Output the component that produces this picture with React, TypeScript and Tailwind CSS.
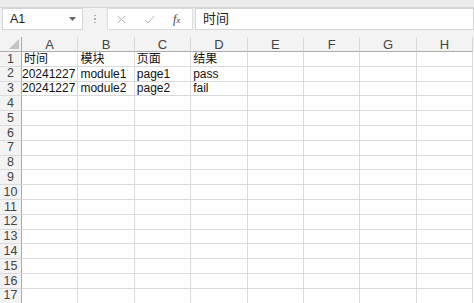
import React from "react";

const columns = ["A", "B", "C", "D", "E", "F", "G", "H"];

type Cell = { text: string; align?: "left" | "right" };

const data: Cell[][] = [
  [{ text: "时间" }, { text: "模块" }, { text: "页面" }, { text: "结果" }],
  [
    { text: "20241227", align: "right" },
    { text: "module1" },
    { text: "page1" },
    { text: "pass" },
  ],
  [
    { text: "20241227", align: "right" },
    { text: "module2" },
    { text: "page2" },
    { text: "fail" },
  ],
];

const rowCount = 17;

function FormulaBar() {
  return (
    <div className="flex h-[37px] flex-col bg-[#f3f3f3]">
      <div className="h-[8px] border-b border-[#d6d6d6] bg-[#ececec]" />
      <div className="flex h-[22px] items-stretch">
        <div className="ml-[2px] flex w-[81px] items-center justify-between border border-[#d4d4d4] bg-white pl-[7px] pr-[6px]">
          <span className="text-[12.5px] text-[#222]">A1</span>
          <svg width="7" height="4" viewBox="0 0 7 4">
            <path d="M0 0 L7 0 L3.5 4 Z" fill="#666" />
          </svg>
        </div>
        <div className="flex w-[24px] items-center justify-center">
          <div className="flex flex-col gap-[2px]">
            <span className="h-[1.5px] w-[1.5px] bg-[#b0b0b0]" />
            <span className="h-[1.5px] w-[1.5px] bg-[#b0b0b0]" />
            <span className="h-[1.5px] w-[1.5px] bg-[#b0b0b0]" />
          </div>
        </div>
        <div className="flex w-[86px] items-center border border-[#dcdcdc] bg-white">
          <svg className="ml-[9px]" width="9" height="9" viewBox="0 0 9 9">
            <path d="M1 1 L8 8 M8 1 L1 8" stroke="#b8b8b8" strokeWidth="1" />
          </svg>
          <svg className="ml-[18px]" width="11" height="9" viewBox="0 0 11 9">
            <path d="M1 5 L4 8 L10 1" stroke="#b8b8b8" strokeWidth="1" fill="none" />
          </svg>
          <span className="ml-[18px] font-['Liberation_Serif',serif] text-[12px] italic leading-none text-[#444]">
            f<span className="text-[9px]">x</span>
          </span>
        </div>
        <div className="ml-[2px] flex flex-1 items-center border border-[#d4d4d4] bg-white pl-[7px]">
          <span className="text-[13px] text-[#222]">时间</span>
        </div>
      </div>
    </div>
  );
}

function Grid() {
  const gridCols = "grid grid-cols-[22px_repeat(8,56.4px)]";
  return (
    <div className="overflow-hidden bg-white">
      <div className={`${gridCols} h-[15px] bg-[#f3f3f3]`}>
        <div className="relative border-b border-r border-[#ababab]">
          <svg className="absolute bottom-[2px] right-[2px]" width="10" height="10" viewBox="0 0 10 10">
            <path d="M10 0 L10 10 L0 10 Z" fill="#c4c4c4" />
          </svg>
        </div>
        {columns.map((c) => (
          <div
            key={c}
            className="flex items-center justify-center border-b border-r border-b-[#ababab] border-r-[#d8d8d8] text-[13px] leading-none text-[#444]"
          >
            {c}
          </div>
        ))}
      </div>
      {Array.from({ length: rowCount }, (_, r) => (
        <div key={r} className={`${gridCols} h-[14.8px]`}>
          <div className="flex items-center justify-center border-b border-r border-b-[#dadada] border-r-[#ababab] bg-[#f3f3f3] text-[12.5px] leading-none text-[#444]">
            {r + 1}
          </div>
          {columns.map((c, ci) => {
            const cell = data[r]?.[ci];
            return (
              <div
                key={c}
                className={`flex items-center overflow-visible whitespace-nowrap border-b border-r border-[#dadada] px-[2px] text-[12px] leading-none text-[#111] ${
                  cell?.align === "right" ? "justify-end" : "justify-start"
                }`}
              >
                {cell?.text}
              </div>
            );
          })}
        </div>
      ))}
    </div>
  );
}

export default function App() {
  return (
    <div className="h-[303px] w-[474px] overflow-hidden bg-white font-['Liberation_Sans','Noto_Sans_CJK_SC',sans-serif]">
      <FormulaBar />
      <Grid />
    </div>
  );
}
